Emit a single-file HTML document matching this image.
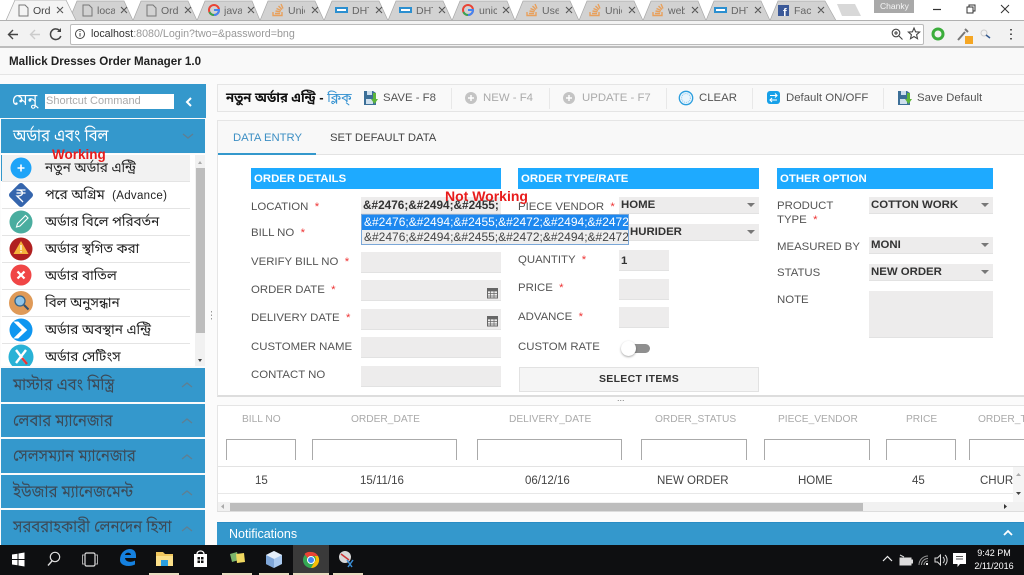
<!DOCTYPE html>
<html><head><meta charset="utf-8">
<style>
html,body{margin:0;padding:0}
body{width:1024px;height:575px;overflow:hidden;position:relative;background:#fff;font-family:"Liberation Sans",sans-serif;color:#444}
div,span,svg{position:absolute;box-sizing:border-box;white-space:nowrap}
.l{font-size:11.4px;color:#555;line-height:14px}
.l b{color:#e33;font-weight:normal}
.i{background:#edecec;border-bottom:1px solid #e2e2e2}
.h{background:#1eaaff;color:#fff;font-weight:bold;font-size:11.4px;height:21px;line-height:22px;padding-left:3px}
.v{font-weight:bold;font-size:11.4px;color:#333;line-height:14px}
.a{width:0;height:0;border-left:4px solid transparent;border-right:4px solid transparent;border-top:4px solid #777}
.acc{left:1px;width:204px;background:#3498cc;color:#3b4a58;font-size:17px;line-height:33px}
.acc span{left:12px;top:0;transform:scaleX(.88);transform-origin:left center}
.m{left:45px;font-size:13.5px;color:#222;line-height:16px}
.sep{left:2px;width:188px;height:1px;background:#e4e4e4}
.tb{font-size:11.4px;line-height:14px;top:91px;color:#555}
.d{top:88px;width:1px;height:21px;background:#e8e8e8}
.th{top:414px;font-size:10.2px;color:#aaa;line-height:12px}
.f{top:439px;height:21px;border:1px solid #aaa;border-bottom:0}
.td{top:475px;font-size:11.5px;color:#444;line-height:13px}
.bn{font-family:'Liberation Sans','Noto Sans Bengali','Lohit Bengali','FreeSans',sans-serif}
</style></head><body>

<!-- browser chrome -->
<div style="left:0;top:0;width:1024px;height:48px;background:#fff"></div>
<svg style="left:0;top:0" width="1024" height="21" font-family="Liberation Sans" font-size="10.5" fill="#666">
<g fill="#d2d2d2" stroke="#a8a8a8" stroke-width=".7">
<polygon points="69,20.500 77,1 124,1 133,20.500"/><polygon points="133,20.500 141,1 188,1 197,20.500"/><polygon points="197,20.500 205,1 252,1 260,20.500"/><polygon points="260,20.500 268,1 315,1 324,20.500"/><polygon points="324,20.500 332,1 379,1 388,20.500"/><polygon points="388,20.500 396,1 443,1 452,20.500"/><polygon points="452,20.500 460,1 507,1 515,20.500"/><polygon points="515,20.500 523,1 570,1 579,20.500"/><polygon points="579,20.500 587,1 634,1 643,20.500"/><polygon points="643,20.500 651,1 698,1 706,20.500"/><polygon points="706,20.500 714,1 761,1 770,20.500"/><polygon points="770,20.500 778,1 825,1 836,20.500"/>
</g>
<polygon points="842,16 837,4 855,4 861,16" fill="#d8d8d8"/>
<polygon points="6,20.500 15,0 66,0 76,20.500" fill="#f4f4f4" stroke="#a8a8a8" stroke-width=".7"/>
<line x1="0" y1="20.500" x2="1024" y2="20.500" stroke="#b0b0b0"/>
<g fill="none" stroke="#777" stroke-width="1"><path d="M19 5h6l3 3v8h-9z"/><path d="M83 5h6l3 3v8h-9z"/><path d="M147 5h6l3 3v8h-9z"/></g>
<svg x="33" y="0" width="17" height="20"><text x="0" y="14" fill="#444">Order</text></svg>
<svg x="97" y="0" width="18" height="20"><text x="0" y="14">localhost</text></svg>
<svg x="161" y="0" width="17" height="20"><text x="0" y="14">Order</text></svg>
<svg x="224" y="0" width="18" height="20"><text x="0" y="14">javascript</text></svg>
<svg x="288" y="0" width="17" height="20"><text x="0" y="14">Unicode</text></svg>
<svg x="352" y="0" width="17" height="20"><text x="0" y="14">DHT</text></svg>
<svg x="416" y="0" width="17" height="20"><text x="0" y="14">DHT</text></svg>
<svg x="479" y="0" width="18" height="20"><text x="0" y="14">unicode</text></svg>
<svg x="542" y="0" width="17" height="20"><text x="0" y="14">User</text></svg>
<svg x="605" y="0" width="17" height="20"><text x="0" y="14">Unicode</text></svg>
<svg x="668" y="0" width="17" height="20"><text x="0" y="14">web</text></svg>
<svg x="731" y="0" width="17" height="20"><text x="0" y="14">DHT</text></svg>
<svg x="794" y="0" width="17" height="20"><text x="0" y="14">Facebook</text></svg>
<g stroke="#555" stroke-width="1.100">
<path d="M57 7l6 6m0-6l-6 6M121 7l6 6m0-6l-6 6M185 7l6 6m0-6l-6 6M248 7l6 6m0-6l-6 6M312 7l6 6m0-6l-6 6M376 7l6 6m0-6l-6 6M439 7l6 6m0-6l-6 6M503 7l6 6m0-6l-6 6M566 7l6 6m0-6l-6 6M629 7l6 6m0-6l-6 6M692 7l6 6m0-6l-6 6M755 7l6 6m0-6l-6 6M818 7l6 6m0-6l-6 6"/>
</g>
<!-- favicons -->
<circle cx="214" cy="10" r="5" fill="none" stroke="#ea4335" stroke-width="2"/><path d="M214 15a5 5 0 0 0 5-5h-5" fill="none" stroke="#4285f4" stroke-width="2"/><path d="M209.500 12a5 5 0 0 0 4.500 3" fill="none" stroke="#34a853" stroke-width="2"/>
<circle cx="468" cy="10" r="5" fill="none" stroke="#ea4335" stroke-width="2"/><path d="M468 15a5 5 0 0 0 5-5h-5" fill="none" stroke="#4285f4" stroke-width="2"/><path d="M463.500 12a5 5 0 0 0 4.500 3" fill="none" stroke="#34a853" stroke-width="2"/>
<g fill="none" stroke="#e8a05c" stroke-width="1.400"><path d="M273 12v3.500h9V12M275 13.500h5M275.500 11l5 .8M276.500 8.500l4.500 2M278.500 6l3.500 3.500M281 4l2 4.500"/><path d="M527 12v3.500h9V12M529 13.500h5M529.500 11l5 .8M530.500 8.500l4.500 2M532.500 6l3.500 3.500M535 4l2 4.500"/><path d="M590 12v3.500h9V12M592 13.500h5M592.500 11l5 .8M593.500 8.500l4.500 2M595.500 6l3.500 3.500M598 4l2 4.500"/><path d="M653 12v3.500h9V12M655 13.500h5M655.500 11l5 .8M656.500 8.500l4.500 2M658.500 6l3.500 3.500M661 4l2 4.500"/></g>
<g fill="#2b8fd0"><rect x="335" y="7" width="13" height="6"/><rect x="399" y="7" width="13" height="6"/><rect x="714" y="7" width="13" height="6"/></g>
<g fill="#fff"><rect x="337" y="9" width="9" height="2"/><rect x="401" y="9" width="9" height="2"/><rect x="716" y="9" width="9" height="2"/></g>
<rect x="778" y="5" width="11" height="11" fill="#3b5998"/><text x="783" y="16" font-size="11" font-weight="bold" fill="#fff">f</text>
<!-- caption -->
<rect x="874" y="0" width="40" height="13" fill="#a9a9a9"/><text x="880" y="9" font-size="8.500" fill="#f6f6f6">Chanky</text>
<path d="M933 9.500h8" stroke="#333" stroke-width="1.200"/>
<path d="M967 7h6v6h-6zM969 7V5h6v6h-2" fill="none" stroke="#333" stroke-width="1"/>
<path d="M1001 5l8 8m0-8l-8 8" stroke="#333" stroke-width="1"/>
</svg>
<div style="left:0;top:21px;width:1024px;height:27px;background:#f2f2f2;border-bottom:2px solid #bdbdbd"></div>
<div style="left:70px;top:24px;width:854px;height:21px;background:#fff;border:1px solid #bbb;border-radius:2px"></div>
<svg style="left:0;top:21px" width="1024" height="27" fill="none" stroke="#444" font-family="Liberation Sans">
<path d="M18 13.500H9M13 9l-4.500 4.500L13 18" stroke-width="1.400"/>
<path d="M40 13.500h-9M35 9l-4.500 4.500L35 18" stroke="#ccc" stroke-width="1.400"/>
<path d="M60 10a5.300 5.300 0 1 0 .8 5" stroke-width="1.500"/><path d="M61 7v4h-4" fill="#444" stroke="none"/>
<circle cx="80" cy="13" r="4.500" stroke-width="1"/><path d="M80 12v3.500M80 10v1" stroke-width="1"/>
<circle cx="896" cy="12" r="3.800" stroke-width="1.100"/><path d="M899 15l3.500 3.500M894 12h4M896 10v4" stroke-width="1.100"/>
<path d="M914 7l1.600 3.800 4 .3-3 2.600.9 4-3.500-2.200-3.500 2.200.9-4-3-2.600 4-.3z" stroke-width="1.100"/>
<circle cx="938" cy="13" r="5" stroke="#3bad3b" stroke-width="3"/>
<path d="M958 19l7-8M965 8l3 3" stroke="#777" stroke-width="2"/><rect x="965" y="15" width="8" height="8" fill="#f5a623" stroke="none"/>
<circle cx="984" cy="12" r="3" stroke="#ccc"/><path d="M986 14l4 3" stroke="#345a90" stroke-width="1.500"/>
<path d="M1011 8v1.500M1011 12.500v1.500M1011 17v1.500" stroke="#444" stroke-width="1.800"/>
</svg>
<div style="left:91px;top:28px;font-size:10.7px;line-height:13px;color:#999"><span style="position:static;color:#333">localhost</span>:8080/Login?two=&amp;password=bng</div>

<!-- app header -->
<div style="left:0;top:48px;width:1024px;height:27px;background:#f9f9f9;border-bottom:1px solid #e5e5e5"></div>
<div style="left:9px;top:55px;font-size:11.6px;font-weight:bold;color:#222;line-height:14px">Mallick Dresses Order Manager 1.0</div>
<div style="left:0;top:75px;width:1024px;height:470px;background:#fbfbfb"></div>

<!-- sidebar -->
<div style="left:0;top:84px;width:206px;height:34px;background:#3498cc"></div>
<div class="bn" style="left:12px;top:90px;font-size:16px;line-height:22px;color:#fff">মেনু</div>
<div style="left:45px;top:94px;width:129px;height:15px;background:#fff;font-size:11px;line-height:15px;color:#aaa;padding-left:1px">Shortcut Command</div>
<svg style="left:184px;top:96px" width="10" height="12"><path d="M7 2L3 6l4 4" fill="none" stroke="#fff" stroke-width="2"/></svg>
<div class="acc bn" style="top:119px;height:34px;color:#fff"><span>অর্ডার এবং বিল</span></div>
<svg style="left:181px;top:132px" width="14" height="8"><path d="M2 2l5 4 5-4" fill="none" stroke="#5f7f92" stroke-width="1.300"/></svg>

<div style="left:1px;top:154px;width:204px;height:212px;background:#fff"></div>
<div style="left:1px;top:155px;width:189px;height:26px;background:#f2f2f2;border-left:1px solid #3498cc"></div>
<div class="sep" style="top:181px"></div><div class="sep" style="top:208px"></div><div class="sep" style="top:235px"></div><div class="sep" style="top:262px"></div><div class="sep" style="top:289px"></div><div class="sep" style="top:316px"></div><div class="sep" style="top:343px"></div>
<div style="left:195px;top:155px;width:10px;height:211px;background:#f1f1f1"></div>
<div style="left:196px;top:168px;width:9px;height:165px;background:#bdbdbd"></div>
<svg style="left:195px;top:155px" width="10" height="211"><path d="M3 9l2-3 2 3z" fill="#aaa"/><path d="M3 204l2 3 2-3z" fill="#444"/></svg>

<svg style="left:8px;top:155px" width="30" height="211">
<circle cx="13" cy="13" r="10.500" fill="#1ea4f8"/><path d="M9.500 13h7M13 9.500v7" stroke="#fff" stroke-width="1.600"/>
<path d="M13 31l9 9-9 9-9-9z" fill="#3565ad" stroke="#3565ad" stroke-width="6" stroke-linejoin="round"/><path d="M8.500 35h9M8.500 38h9M10 35c6 0 6 6 0 6h-1l6 6" fill="none" stroke="#fff" stroke-width="1.300"/>
<circle cx="13" cy="67" r="11.500" fill="#4aad9f"/><path d="M8.500 72l1-3.500 8-8 2.500 2.500-8 8z" fill="none" stroke="#fff" stroke-width="1.100"/>
<circle cx="13" cy="94" r="11.500" fill="#b02020"/><path d="M13 86l7.500 13h-15z" fill="#f5b43c"/><path d="M13 90v5M13 96v1.500" stroke="#fff" stroke-width="1.300"/>
<circle cx="13" cy="120" r="10.500" fill="#f04646"/><path d="M9.500 116.500l7 7m0-7l-7 7" stroke="#fff" stroke-width="2.200"/>
<circle cx="13" cy="148" r="12" fill="#df9a58"/><circle cx="12" cy="146" r="5" fill="#8fc4e8" stroke="#33648c" stroke-width="1.300"/><path d="M16 150l4.500 4.500" stroke="#33506c" stroke-width="2"/>
<circle cx="13" cy="175" r="11.500" fill="#0e96f0"/><path d="M10 167l8.500 8-8.500 8h-3.500l8-8-8-8z" fill="#fff" stroke="#fff"/>
<circle cx="13" cy="202" r="12.500" fill="#29b2d6"/><path d="M8 195l10 13M18 195l-10 13" stroke="#fff" stroke-width="2.400"/><path d="M14 203l5 6" stroke="#e33" stroke-width="2.400"/>
</svg>

<div class="bn" style="left:0;top:0;width:1024px;height:575px">
<div class="m" style="top:160px">নতুন অর্ডার এন্ট্রি</div>
<div class="m" style="top:187px">পরে অগ্রিম&nbsp; <span style="position:static;font-size:11.5px;letter-spacing:.3px">(Advance)</span></div>
<div class="m" style="top:214px">অর্ডার বিলে পরিবর্তন</div>
<div class="m" style="top:241px">অর্ডার স্থগিত করা</div>
<div class="m" style="top:268px">অর্ডার বাতিল</div>
<div class="m" style="top:295px">বিল অনুসন্ধান</div>
<div class="m" style="top:322px">অর্ডার অবস্থান এন্ট্রি</div>
<div class="m" style="top:349px;height:17px;overflow:hidden">অর্ডার সেটিংস</div>
<div class="acc" style="top:368px;height:34px"><span>মাস্টার এবং মিস্ত্রি</span></div>
<div class="acc" style="top:404px;height:33px"><span>লেবার ম্যানেজার</span></div>
<div class="acc" style="top:439px;height:34px"><span>সেলসম্যান ম্যানেজার</span></div>
<div class="acc" style="top:475px;height:33px"><span>ইউজার ম্যানেজমেন্ট</span></div>
<div class="acc" style="top:510px;height:35px"><span>সরবরাহকারী লেনদেন হিসা</span></div>
</div>
<svg style="left:180px;top:368px" width="16" height="176" fill="none" stroke="#5f7f92" stroke-width="1.300"><path d="M2 19l5-4 5 4M2 55l5-4 5 4M2 91l5-4 5 4M2 127l5-4 5 4M2 163l5-4 5 4"/></svg>
<div style="left:52px;top:148px;font-size:13.5px;font-weight:bold;color:#e81c1c;line-height:14px">Working</div>
<svg style="left:210px;top:310px" width="4" height="10"><path d="M1.500 1v1.500M1.500 4.500V6M1.500 8v1.500" stroke="#999"/></svg>

<!-- toolbar -->
<div style="left:217px;top:84px;width:807px;height:28px;background:#f9f9f9;border:1px solid #e5e5e5;border-right:0"></div>
<div class="bn" style="left:226px;top:90px;font-size:13px;font-weight:bold;line-height:16px;color:#111">নতুন অর্ডার এন্ট্রি - <span style="position:static;color:#2f8fd0;font-weight:normal">ক্লিক্</span></div>
<div class="d" style="left:451px"></div><div class="d" style="left:549px"></div><div class="d" style="left:666px"></div><div class="d" style="left:752px"></div><div class="d" style="left:883px"></div>
<svg style="left:362px;top:89px" width="18" height="18"><path d="M2 2h9l3 2v12H2z" fill="#3c6f98"/><rect x="4" y="10" width="7" height="5" fill="#cfe0ee"/><rect x="5" y="2" width="5" height="4" fill="#cfe0ee"/><path d="M11 4v6H9l3.500 5 3.500-5h-2V4z" fill="#5db53c"/></svg>
<svg style="left:896px;top:89px" width="18" height="18"><path d="M2 2h9l3 2v12H2z" fill="#3c6f98"/><rect x="4" y="10" width="7" height="5" fill="#cfe0ee"/><rect x="5" y="2" width="5" height="4" fill="#cfe0ee"/><path d="M11 4v6H9l3.500 5 3.500-5h-2V4z" fill="#5db53c"/></svg>
<svg style="left:464px;top:90px" width="16" height="16"><circle cx="7" cy="8" r="6" fill="#c4c4c4"/><path d="M7 5v6M4 8h6" stroke="#fff" stroke-width="1.500"/></svg>
<svg style="left:562px;top:90px" width="16" height="16"><circle cx="7" cy="8" r="6" fill="#c4c4c4"/><path d="M7 5v6M4 8h6" stroke="#fff" stroke-width="1.500"/></svg>
<svg style="left:678px;top:90px" width="17" height="16"><circle cx="8" cy="8" r="6.700" fill="#e9f5fd" stroke="#2c9ede" stroke-width="1.300"/><circle cx="8" cy="8" r="4.400" fill="none" stroke="#8cc8ee" stroke-dasharray="1 1"/></svg>
<svg style="left:766px;top:90px" width="15" height="16"><rect x="1" y="1" width="13" height="13" rx="3" fill="#16a0e8"/><path d="M4 5.500h7M9 3.500l2 2-2 2M11 10H4M6 8l-2 2 2 2" stroke="#fff" fill="none" stroke-width="1.100"/></svg>
<div class="tb" style="left:383px">SAVE - F8</div>
<div class="tb" style="left:483px;color:#aaa">NEW - F4</div>
<div class="tb" style="left:582px;color:#aaa">UPDATE - F7</div>
<div class="tb" style="left:699px">CLEAR</div>
<div class="tb" style="left:786px">Default ON/OFF</div>
<div class="tb" style="left:917px">Save Default</div>

<!-- form panel -->
<div style="left:217px;top:120px;width:807px;height:277px;background:#fff;border:1px solid #e5e5e5;border-right:0;border-bottom:2px solid #ddd"></div>
<div style="left:218px;top:121px;width:806px;height:34px;background:#f8f8f8;border-bottom:1px solid #e3e3e3"></div>
<div style="left:218px;top:153px;width:98px;height:2px;background:#3498cc"></div>
<div style="left:233px;top:131px;font-size:11.3px;line-height:14px;color:#3d8fc4">DATA ENTRY</div>
<div style="left:330px;top:131px;font-size:11.3px;line-height:14px;color:#444">SET DEFAULT DATA</div>

<div class="h" style="left:251px;top:168px;width:250px">ORDER DETAILS</div>
<div class="h" style="left:518px;top:168px;width:241px">ORDER TYPE/RATE</div>
<div class="h" style="left:777px;top:168px;width:216px">OTHER OPTION</div>

<div class="l" style="left:251px;top:200px">LOCATION &nbsp;<b>*</b></div>
<div class="l" style="left:251px;top:226px">BILL NO &nbsp;<b>*</b></div>
<div class="l" style="left:251px;top:255px">VERIFY BILL NO &nbsp;<b>*</b></div>
<div class="l" style="left:251px;top:283px">ORDER DATE &nbsp;<b>*</b></div>
<div class="l" style="left:251px;top:311px">DELIVERY DATE &nbsp;<b>*</b></div>
<div class="l" style="left:251px;top:340px">CUSTOMER NAME</div>
<div class="l" style="left:251px;top:368px">CONTACT NO</div>

<div class="i" style="left:361px;top:197px;width:140px;height:17px"></div>
<div class="i" style="left:361px;top:252px;width:140px;height:21px"></div>
<div class="i" style="left:361px;top:280px;width:140px;height:21px"></div>
<div class="i" style="left:361px;top:309px;width:140px;height:21px"></div>
<div class="i" style="left:361px;top:337px;width:140px;height:21px"></div>
<div class="i" style="left:361px;top:366px;width:140px;height:21px"></div>
<svg style="left:487px;top:287px" width="12" height="12"><rect x=".5" y="1.500" width="10" height="9.500" fill="none" stroke="#666"/><path d="M.5 2h10v2h-10zM3.500 4v7M7 4v7M1 6.500h9M1 9h9" fill="#666" stroke="#666" stroke-width=".7"/></svg>
<svg style="left:487px;top:315px" width="12" height="12"><rect x=".5" y="1.500" width="10" height="9.500" fill="none" stroke="#666"/><path d="M.5 2h10v2h-10zM3.500 4v7M7 4v7M1 6.500h9M1 9h9" fill="#666" stroke="#666" stroke-width=".7"/></svg>
<div class="v" style="left:363px;top:198px;font-size:11.8px">&amp;#2476;&amp;#2494;&amp;#2455;</div>

<div class="l" style="left:518px;top:200px">PIECE VENDOR &nbsp;<b>*</b></div>
<div class="l" style="left:518px;top:253px">QUANTITY &nbsp;<b>*</b></div>
<div class="l" style="left:518px;top:281px">PRICE &nbsp;<b>*</b></div>
<div class="l" style="left:518px;top:310px">ADVANCE &nbsp;<b>*</b></div>
<div class="l" style="left:518px;top:340px">CUSTOM RATE</div>
<div class="i" style="left:619px;top:197px;width:140px;height:17px"></div>
<div class="i" style="left:619px;top:224px;width:140px;height:17px"></div>
<div class="i" style="left:619px;top:250px;width:50px;height:21px"></div>
<div class="i" style="left:619px;top:279px;width:50px;height:21px"></div>
<div class="i" style="left:619px;top:307px;width:50px;height:21px"></div>
<div class="v" style="left:621px;top:198px">HOME</div>
<div class="v" style="left:630px;top:225px">HURIDER</div>
<div class="v" style="left:621px;top:254px">1</div>
<div class="a" style="left:747px;top:203px"></div>
<div class="a" style="left:747px;top:230px"></div>
<div style="left:628px;top:344px;width:22px;height:9px;border-radius:5px;background:#8f8f8f"></div>
<div style="left:621px;top:341px;width:15px;height:15px;border-radius:50%;background:#fff;box-shadow:0 1px 2px rgba(0,0,0,.35)"></div>
<div style="left:519px;top:367px;width:240px;height:25px;background:#f5f5f5;border:1px solid #e2e2e2;text-align:center;font-size:10.5px;font-weight:bold;line-height:23px;color:#333;letter-spacing:.3px">SELECT ITEMS</div>

<div class="l" style="left:777px;top:199px">PRODUCT</div>
<div class="l" style="left:777px;top:213px">TYPE &nbsp;<b>*</b></div>
<div class="l" style="left:777px;top:240px">MEASURED BY</div>
<div class="l" style="left:777px;top:266px">STATUS</div>
<div class="l" style="left:777px;top:293px">NOTE</div>
<div class="i" style="left:869px;top:197px;width:124px;height:17px"></div>
<div class="i" style="left:869px;top:237px;width:124px;height:17px"></div>
<div class="i" style="left:869px;top:264px;width:124px;height:17px"></div>
<div class="i" style="left:869px;top:291px;width:124px;height:47px"></div>
<div class="v" style="left:871px;top:198px">COTTON WORK</div>
<div class="v" style="left:871px;top:238px">MONI</div>
<div class="v" style="left:871px;top:265px">NEW ORDER</div>
<div class="a" style="left:981px;top:203px"></div>
<div class="a" style="left:981px;top:243px"></div>
<div class="a" style="left:981px;top:270px"></div>

<!-- open dropdown -->
<div style="left:361px;top:214px;width:268px;height:31px;background:#eee;border:1px solid #7aa7d8;overflow:hidden;font-size:12px;line-height:15px">
<div style="left:0;top:0;width:266px;height:15px;background:#1e88ef;color:#fff;padding-left:2px;overflow:hidden">&amp;#2476;&amp;#2494;&amp;#2455;&amp;#2472;&amp;#2494;&amp;#2472;</div>
<div style="left:0;top:15px;width:266px;height:15px;color:#444;padding-left:2px;overflow:hidden">&amp;#2476;&amp;#2494;&amp;#2455;&amp;#2472;&amp;#2494;&amp;#2472;</div>
</div>
<div style="left:445px;top:189px;font-size:14px;font-weight:bold;color:#e81c1c;line-height:14px">Not Working</div>

<div style="left:617px;top:393px;font-size:9px;line-height:10px;color:#777">...</div>

<!-- table -->
<div style="left:217px;top:405px;width:807px;height:107px;background:#fff;border:1px solid #e5e5e5;border-right:0;border-bottom:2px solid #ddd"></div>
<div class="th" style="left:242px">BILL NO</div>
<div class="th" style="left:351px">ORDER_DATE</div>
<div class="th" style="left:509px">DELIVERY_DATE</div>
<div class="th" style="left:655px">ORDER_STATUS</div>
<div class="th" style="left:778px">PIECE_VENDOR</div>
<div class="th" style="left:906px">PRICE</div>
<div class="th" style="left:978px">ORDER_T</div>
<div class="f" style="left:226px;width:70px"></div>
<div class="f" style="left:312px;width:145px"></div>
<div class="f" style="left:477px;width:145px"></div>
<div class="f" style="left:641px;width:106px"></div>
<div class="f" style="left:764px;width:106px"></div>
<div class="f" style="left:886px;width:70px"></div>
<div class="f" style="left:969px;width:55px;border-right:0"></div>
<div style="left:218px;top:466px;width:806px;height:1px;background:#e3e3e3"></div>
<div style="left:218px;top:493px;width:806px;height:1px;background:#e8e8e8"></div>
<div class="td" style="left:255px">15</div>
<div class="td" style="left:360px">15/11/16</div>
<div class="td" style="left:525px">06/12/16</div>
<div class="td" style="left:657px">NEW ORDER</div>
<div class="td" style="left:798px">HOME</div>
<div class="td" style="left:912px">45</div>
<div class="td" style="left:980px">CHUR</div>
<div style="left:1013px;top:467px;width:11px;height:35px;background:#f5f5f5"></div>
<svg style="left:1013px;top:467px" width="11" height="35"><path d="M3 9l2.500-3L8 9z" fill="#aaa"/><path d="M3 25l2.500 3L8 25z" fill="#444"/></svg>
<div style="left:218px;top:502px;width:806px;height:9px;background:#f1f1f1"></div>
<div style="left:230px;top:503px;width:633px;height:8px;background:#bdbdbd"></div>
<svg style="left:218px;top:502px" width="806" height="9"><path d="M6 2L3 4.500 6 7z" fill="#aaa"/><path d="M786 2l3 2.500-3 2.500z" fill="#333"/></svg>

<!-- notifications -->
<div style="left:217px;top:522px;width:807px;height:23px;background:#3498cc;border-top:1px solid #2a8cc4;color:#fff;font-size:12.500px;line-height:22px;padding-left:12px">Notifications</div>
<svg style="left:1002px;top:528px" width="12" height="10"><path d="M2 7l4-4 4 4" fill="none" stroke="#fff" stroke-width="1.800"/></svg>

<!-- taskbar -->
<div style="left:0;top:545px;width:1024px;height:30px;background:#0e0f11"></div>
<div style="left:293px;top:545px;width:36px;height:30px;background:#3a3a3a"></div>
<svg style="left:0;top:545px" width="1024" height="30">
<path d="M12 9.500l5.500-.8v5.300H12zM18.500 8.500l6-1v6.500h-6zM12 15h5.500v5.300L12 19.500zM18.500 15h6v6.500l-6-1z" fill="#fff"/>
<circle cx="55" cy="12" r="4.700" fill="none" stroke="#ddd" stroke-width="1.200"/><path d="M52 16l-4 4.500" stroke="#ddd" stroke-width="1.400"/>
<rect x="85" y="8" width="10" height="13" rx="1.500" fill="none" stroke="#ddd" stroke-width="1.200"/><path d="M85 10h-2.500v9H85M95 10h2.500v9H95" fill="none" stroke="#aaa"/>
<path d="M120 15c0-8 6-11 10-11 3.500 0 6 2.500 6 6.500v2.500h-11c.5 4 6 5 10 2.500v4c-6 3-15 1.500-15-4.500zm5-5h6c0-3-5.500-3-6 0z" fill="#1581e0" fill-rule="evenodd"/>
<path d="M156 7h7l2 2h8v12h-17z" fill="#f0c75e"/><path d="M156 11h17v10h-17z" fill="#fbe08a"/><path d="M161 15h7v6h-7z" fill="#2a9fe0"/>
<path d="M194 9h13v13h-13z" fill="#fff"/><path d="M197 9c0-4 7-4 7 0" fill="none" stroke="#fff" stroke-width="1.300"/><path d="M197.500 12h2.500v2.500h-2.500zM201 12h2.500v2.500H201zM197.500 15.500h2.500v2.500h-2.500zM201 15.500h2.500v2.500H201z" fill="#111"/>
<path d="M230 9l7-2 2 8-7 2z" fill="#7cb56b"/><path d="M236 9l8-1 1 9-8 1z" fill="#f0d860"/>
<path d="M274 6l8 4v9l-8 4-8-4v-9z" fill="#a9c9ef"/><path d="M274 6l8 4-8 4-8-4z" fill="#e4eef9"/><path d="M274 14v9l-8-4v-9z" fill="#7ea6d8"/>
<circle cx="311" cy="15" r="8" fill="#34a853"/><path d="M311 7a8 8 0 0 1 7 4h-7a4 4 0 0 0-3.500 2l-3-4a8 8 0 0 1 6.500-2z" fill="#ea4335"/><path d="M318 11a8 8 0 0 1-7 12l3.500-6a4 4 0 0 0 0-6z" fill="#fbbc05"/><circle cx="311" cy="15" r="3.500" fill="#4285f4" stroke="#fff"/>
<circle cx="345" cy="12" r="6" fill="#d8d8d8"/><path d="M341 9l8 6" stroke="#c33" stroke-width="1.500"/><path d="M347 15l5 7M353 15l-5 7" stroke="#3a8fd8" stroke-width="1.500"/>
<g fill="#e8dcc0"><rect x="149" y="28" width="30" height="2"/><rect x="222" y="28" width="30" height="2"/><rect x="259" y="28" width="30" height="2"/><rect x="293" y="28" width="36" height="2"/><rect x="333" y="28" width="30" height="2"/></g>
<path d="M883 16l4.500-4.500 4.500 4.500" fill="none" stroke="#eee" stroke-width="1.200"/>
<path d="M900 13h11v7h-11zM911 15h1.500v3H911zM900 10l4 2" fill="#ddd" stroke="#ddd"/>
<path d="M919 20a9 9 0 0 1 9-9M921.500 20a6.500 6.500 0 0 1 6.500-6.500M924 20a4 4 0 0 1 4-4" fill="none" stroke="#999"/><rect x="926" y="18" width="2" height="2" fill="#eee"/>
<path d="M935 13h2.500l3-3v10l-3-3H935z" fill="none" stroke="#ddd"/><path d="M943 12a4 4 0 0 1 0 6M945 10a7 7 0 0 1 0 10" fill="none" stroke="#ddd"/>
<path d="M953 8h13v11h-6l-2.500 3v-3H953z" fill="#fff"/><path d="M956 11.500h7M956 14h7" stroke="#555"/>
</svg>
<div style="left:974px;top:547px;width:40px;text-align:center;font-size:9px;line-height:13px;color:#fff">9:42 PM</div>
<div style="left:969px;top:560px;width:50px;text-align:center;font-size:9px;line-height:13px;color:#fff">2/11/2016</div>
</body></html>
